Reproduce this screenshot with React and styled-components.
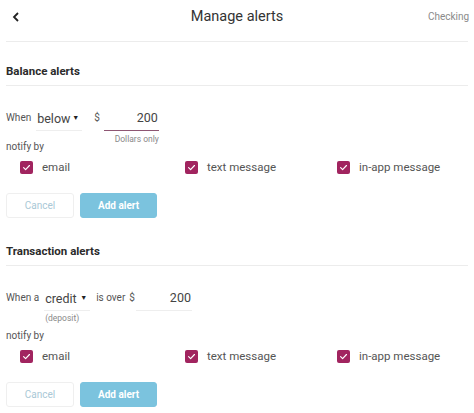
import React from 'react';
import styled, { createGlobalStyle } from 'styled-components';

const GlobalStyle = createGlobalStyle`
  body {
    margin: 0;
    background: #fff;
    font-family: Roboto, "Liberation Sans", sans-serif;
    color: #444;
  }
`

const Page = styled.div`
  width: 474px;
  height: 413px;
  box-sizing: border-box;
  padding: 0 6px;
  overflow: hidden;
`

const Header = styled.div`
  display: flex;
  align-items: center;
  justify-content: space-between;
  height: 33px;
  padding-bottom: 8px;
  border-bottom: 1px solid #ececec;
`

const BackButton = styled.button`
  width: 40px;
  padding: 0 0 0 6px;
  border: none;
  background: none;
  display: flex;
  align-items: center;
`

const Title = styled.div`
  font-size: 14.5px;
  color: #333;
`

const Account = styled.div`
  width: 40px;
  text-align: right;
  font-size: 10px;
  color: #8a8a8a;
`

const Section = styled.section`
  padding-bottom: 4px;
`

const SectionTitle = styled.h2`
  margin: 0;
  padding: 21px 0 6px;
  font-size: 11.5px;
  line-height: 16px;
  font-weight: 700;
  color: #2b2b2b;
  border-bottom: 1px solid #ececec;
`

const ConditionRow = styled.div`
  display: flex;
  align-items: flex-start;
  margin-top: 20px;
`

const Word = styled.span`
  font-size: 10px;
  line-height: 24px;
  color: #555;
  margin-left: ${({ gap }) => gap || 0}px;
`

const Field = styled.div`
  display: flex;
  flex-direction: column;
  align-items: ${({ right }) => (right ? 'flex-end' : 'flex-start')};
  margin-left: ${({ gap }) => gap || 0}px;
`

const Select = styled.div`
  display: flex;
  align-items: center;
  justify-content: space-between;
  box-sizing: border-box;
  width: ${({ width }) => width}px;
  height: 25px;
  padding: 0 3px 0 1px;
  font-size: 12.5px;
  color: #444;
  border-bottom: 1px solid #eeeeee;
`

const Caret = styled.span`
  font-size: 7px;
  color: #222;
`

const Amount = styled.div`
  box-sizing: border-box;
  width: ${({ width }) => width}px;
  height: 25px;
  line-height: 23px;
  padding-right: 1px;
  text-align: right;
  font-size: 12.5px;
  color: #444;
  border-bottom: ${({ active }) => (active ? '1.5px solid #8e5673' : '1px solid #eeeeee')};
`

const Helper = styled.div`
  font-size: 8.5px;
  line-height: 11px;
  color: #8a8a8a;
  margin-top: ${({ top }) => top}px;
  padding-left: ${({ indent }) => indent || 0}px;
`

const NotifyLabel = styled.div`
  font-size: 10px;
  line-height: 14px;
  color: #555;
  margin-top: ${({ top }) => top}px;
`

const Channels = styled.div`
  display: grid;
  grid-template-columns: 165px 152px auto;
  margin-top: 3px;
  padding-left: 14px;
`

const Channel = styled.label`
  display: flex;
  align-items: center;
  height: 20px;
  gap: 9px;
  font-size: 11.5px;
  color: #555;
`

const Box = styled.span`
  width: 13px;
  height: 13px;
  border-radius: 2px;
  background: #a1245f;
  display: flex;
  align-items: center;
  justify-content: center;
`

const Actions = styled.div`
  display: flex;
  gap: 6px;
  margin-top: 16px;
`

const Button = styled.button`
  box-sizing: border-box;
  height: 25px;
  width: ${({ primary }) => (primary ? 77 : 68)}px;
  border-radius: 3px;
  font-family: Roboto, "Liberation Sans", sans-serif;
  font-size: 10px;
  font-weight: ${({ primary }) => (primary ? 700 : 400)};
  color: ${({ primary }) => (primary ? '#fff' : '#a9c8d6')};
  background: ${({ primary }) => (primary ? '#7bc3de' : '#fff')};
  border: 1px solid ${({ primary }) => (primary ? '#7bc3de' : '#efefef')};
`

const Check = () => (
  <svg width="9" height="9" viewBox="0 0 10 10">
    <path d="M1.8 5.2 L4 7.3 L8.3 2.8" fill="none" stroke="#fff" strokeWidth="1.3" strokeLinecap="round" strokeLinejoin="round" />
  </svg>
)

const channels = ['email', 'text message', 'in-app message']

const NotifyBy = ({ top }) => (
  <>
    <NotifyLabel top={top}>notify by</NotifyLabel>
    <Channels>
      {channels.map(c => (
        <Channel key={c}>
          <Box><Check /></Box>
          {c}
        </Channel>
      ))}
    </Channels>
    <Actions>
      <Button>Cancel</Button>
      <Button primary>Add alert</Button>
    </Actions>
  </>
)

export default function App() {
  return (
    <Page>
      <GlobalStyle />
      <Header>
        <BackButton>
          <svg width="8" height="10" viewBox="0 0 8 10">
            <path d="M6 1 L2 5 L6 9" fill="none" stroke="#222" strokeWidth="1.8" />
          </svg>
        </BackButton>
        <Title>Manage alerts</Title>
        <Account>Checking</Account>
      </Header>

      <Section>
        <SectionTitle>Balance alerts</SectionTitle>
        <ConditionRow>
          <Word>When</Word>
          <Field gap={5}>
            <Select width={46}>below<Caret>▼</Caret></Select>
          </Field>
          <Word gap={12}>$</Word>
          <Field gap={4} right>
            <Amount width={55} active>200</Amount>
            <Helper top={3}>Dollars only</Helper>
          </Field>
        </ConditionRow>
        <NotifyBy top={-5} />
      </Section>

      <Section>
        <SectionTitle>Transaction alerts</SectionTitle>
        <ConditionRow>
          <Word>When a</Word>
          <Field gap={5}>
            <Select width={46}>credit<Caret>▼</Caret></Select>
            <Helper top={2} indent={1}>(deposit)</Helper>
          </Field>
          <Word gap={6}>is over</Word>
          <Word gap={4}>$</Word>
          <Field gap={1}>
            <Amount width={56}>200</Amount>
          </Field>
        </ConditionRow>
        <NotifyBy top={5} />
      </Section>
    </Page>
  )
}
